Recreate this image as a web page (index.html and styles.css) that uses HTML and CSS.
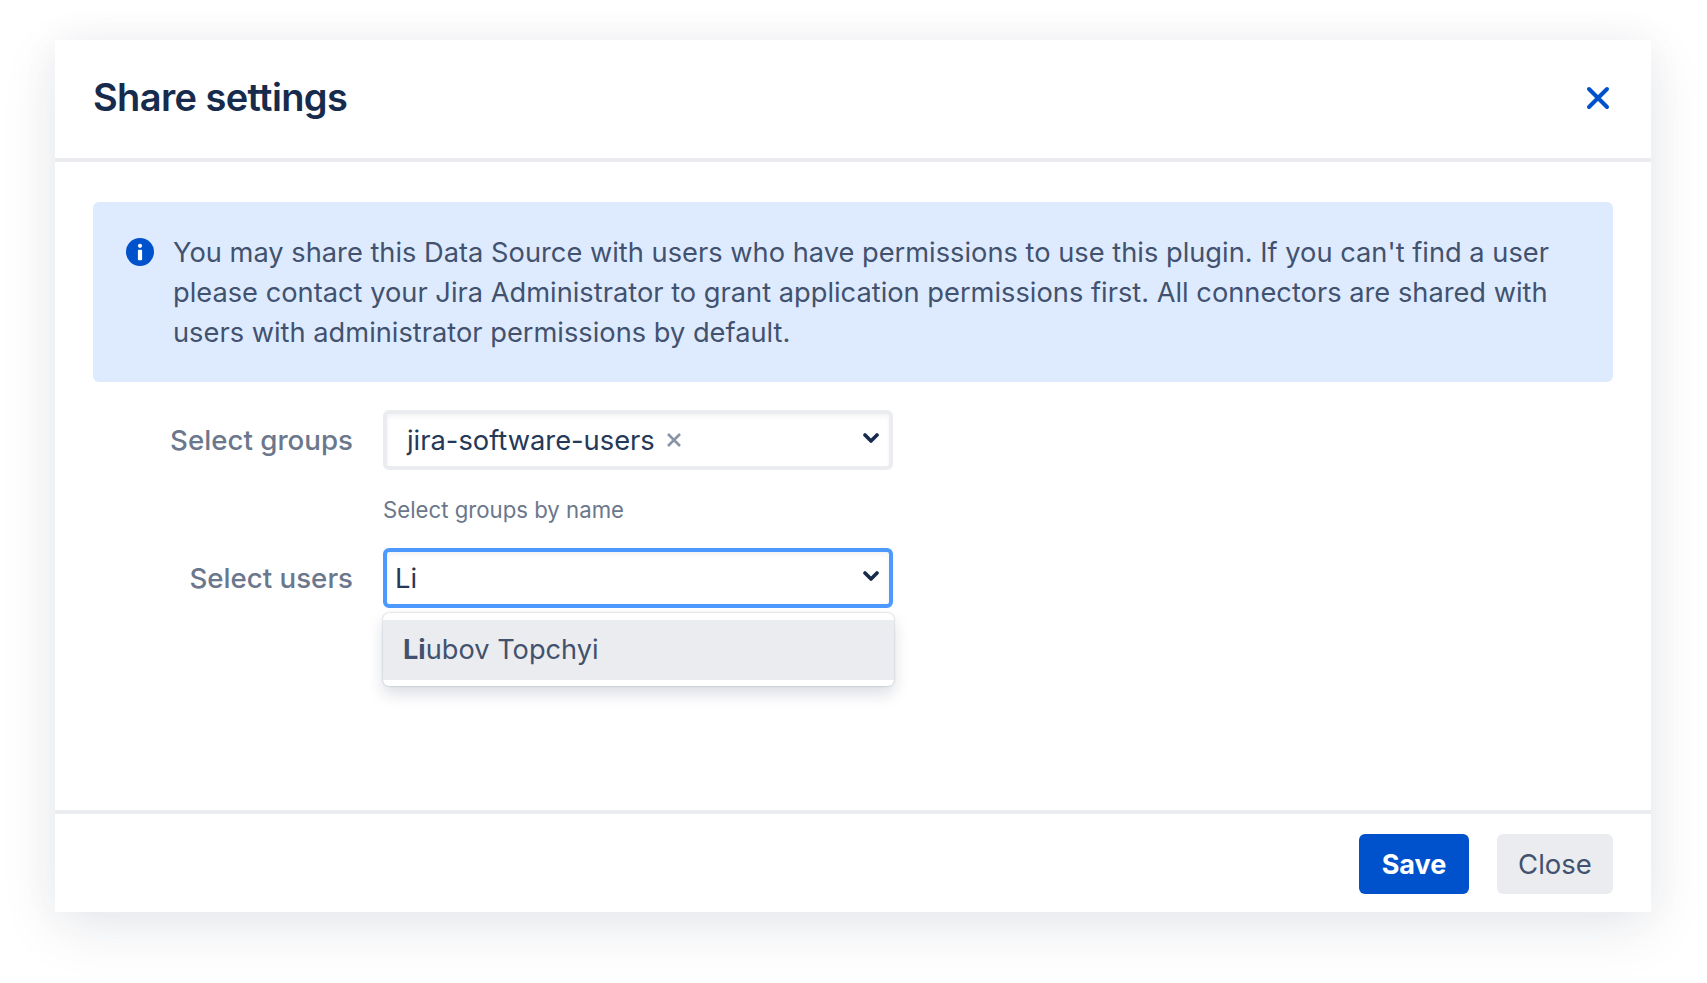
FILE: index.html
```html
<!DOCTYPE html>
<html lang="en">
<head>
<meta charset="utf-8">
<title>Share settings</title>
<link rel="stylesheet" href="styles.css">
</head>
<body>
<div class="modal">
  <header class="modal-header">
    <h1 class="title">Share settings</h1>
    <svg class="close-icon" viewBox="0 0 24 24" width="24" height="24"><path d="M3 3 21 21M21 3 3 21" fill="none" stroke="#0052cc" stroke-width="4" stroke-linecap="round"/></svg>
  </header>
  <main class="modal-body">
    <div class="alert">
      <svg class="info-icon" viewBox="0 0 28 28" width="28" height="28"><circle cx="14" cy="14" r="14" fill="#0052cc"/><circle cx="14" cy="7.8" r="2.1" fill="#fff"/><rect x="11.9" y="11.8" width="4.2" height="10.4" rx="1" fill="#fff"/></svg>
      <p class="alert-text">You may share this Data Source with users who have permissions to use this plugin. If you can't find a user please contact your Jira Administrator to grant application permissions first. All connectors are shared with users with administrator permissions by default.</p>
    </div>
    <div class="form">
      <div class="label">Select groups</div>
      <div class="select">
        <span class="tag">jira-software-users</span>
        <svg class="tag-x" viewBox="0 0 14 14" width="14" height="14"><path d="M1 1 13 13M13 1 1 13" fill="none" stroke="#8993a4" stroke-width="2.6"/></svg>
        <svg class="chevron" viewBox="0 0 16 12" width="16" height="12"><path d="M2 3 8 9 14 3" fill="none" stroke="#172b4d" stroke-width="3.6" stroke-linecap="round" stroke-linejoin="round"/></svg>
      </div>
      <div class="hint">Select groups by name</div>
      <div class="label">Select users</div>
      <div class="combo">
        <div class="select select-active">
          <span class="typed">Li</span>
          <svg class="chevron" viewBox="0 0 16 12" width="16" height="12"><path d="M2 3 8 9 14 3" fill="none" stroke="#172b4d" stroke-width="3.6" stroke-linecap="round" stroke-linejoin="round"/></svg>
        </div>
        <div class="menu">
          <div class="option"><b>Li</b>ubov Topchyi</div>
        </div>
      </div>
    </div>
  </main>
  <footer class="modal-footer">
    <button class="btn btn-primary">Save</button>
    <button class="btn btn-default">Close</button>
  </footer>
</div>
</body>
</html>
```
FILE: styles.css
```css
* { box-sizing: border-box; }
html, body { margin: 0; height: 100%; }
body {
  background: #fff;
  padding: 40px 56px 71px 55px;
  font-family: Inter, "Liberation Sans", sans-serif;
  color: #42526e;
  overflow: hidden;
}
.modal {
  height: 872px;
  background: #fff;
  display: flex;
  flex-direction: column;
  box-shadow: 0 16px 56px rgba(9, 30, 66, 0.09), 0 0 40px rgba(9, 30, 66, 0.04);
}
.modal-header {
  height: 122px;
  flex: none;
  padding: 0 41px 4px 38px;
  border-bottom: 4px solid #ebecf0;
  display: flex;
  align-items: center;
  justify-content: space-between;
}
.title {
  margin: 0;
  font-size: 38px;
  font-weight: 600;
  letter-spacing: -0.62px;
  color: #172b4d;
}
.close-icon { display: block; margin-top: 1px; }
.modal-body {
  flex: 1;
  padding: 40px 38px 0;
}
.alert {
  height: 180px;
  background: #deebff;
  border-radius: 6px;
  padding: 31px 40px 0 33px;
  display: flex;
  align-items: flex-start;
  gap: 19px;
}
.info-icon { flex: none; margin-top: 5px; }
.alert-text {
  margin: 0;
  font-size: 27.25px;
  line-height: 40px;
  color: #42526e;
}
.form {
  margin-top: 28px;
  display: grid;
  grid-template-columns: 260px 510px;
  column-gap: 30px;
  align-items: start;
}
.label {
  text-align: right;
  font-size: 27.7px;
  font-weight: 500;
  line-height: 60px;
  color: #6b778c;
}
.select {
  height: 60px;
  border: 4px solid #ebecf0;
  border-radius: 6px;
  background: #fff;
  display: flex;
  align-items: center;
  padding: 0 10px 0 20px;
  box-shadow: inset 0 3px 4px rgba(9, 30, 66, 0.05);
}
.select-active {
  border-color: #4c9aff;
  padding-left: 8px;
}
.tag { font-size: 27.3px; color: #253858; }
.typed { font-size: 27.3px; color: #253858; }
.tag-x { margin-left: 12px; margin-top: -1px; }
.chevron { margin-left: auto; margin-top: -4px; }
.hint {
  grid-column: 2;
  font-size: 22.2px;
  line-height: 32px;
  margin-top: 24px;
  margin-bottom: 22px;
  color: #6b778c;
}
.combo { position: relative; }
.menu {
  position: absolute;
  top: 65px;
  left: 0;
  width: 511px;
  height: 73px;
  padding: 7px 0 6px;
  background: #fff;
  border-radius: 6px;
  box-shadow: 0 8px 16px rgba(9, 30, 66, 0.15), 0 0 2px rgba(9, 30, 66, 0.3);
}
.option {
  height: 60px;
  background: #ebecf0;
  padding-left: 20px;
  font-size: 27.2px;
  line-height: 60px;
  color: #42526e;
}
.modal-footer {
  height: 102px;
  flex: none;
  border-top: 4px solid #ebecf0;
  padding: 20px 38px 0;
  display: flex;
  justify-content: flex-end;
  gap: 28px;
}
.btn {
  height: 60px;
  border: 0;
  border-radius: 6px;
  font-family: inherit;
  font-size: 27.5px;
  padding: 0;
}
.btn-primary {
  width: 110px;
  background: #0052cc;
  color: #fff;
  font-weight: 700;
  font-size: 27px;
}
.btn-default {
  width: 116px;
  background: #ebecf0;
  color: #42526e;
}
```
